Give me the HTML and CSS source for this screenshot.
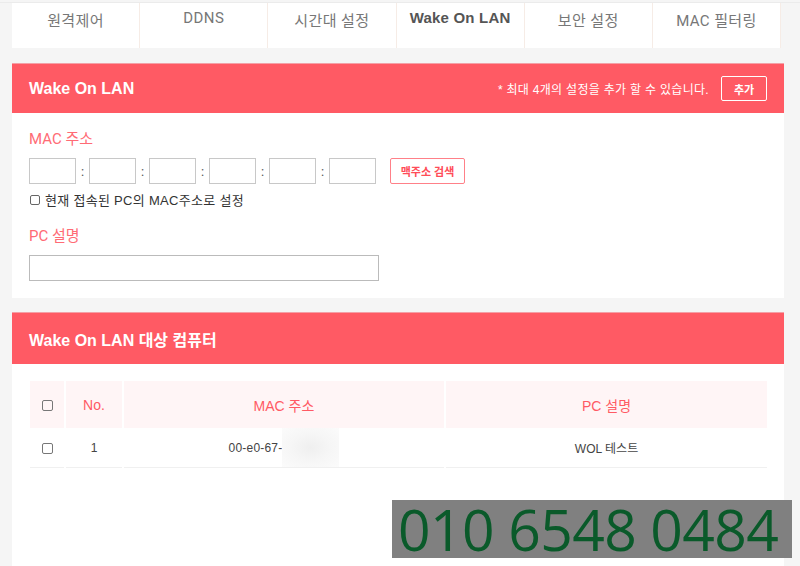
FILE: index.html
```html
<!DOCTYPE html>
<html lang="ko">
<head>
<meta charset="utf-8">
<link rel="stylesheet" href="styles.css">
</head>
<body>
<div class="page">
  <nav class="tabs">
    <div class="tab">원격제어</div>
    <div class="tab">DDNS</div>
    <div class="tab">시간대 설정</div>
    <div class="tab active">Wake On LAN</div>
    <div class="tab">보안 설정</div>
    <div class="tab">MAC 필터링</div>
  </nav>

  <section class="panel">
    <header class="panel-head">
      <h2>Wake On LAN</h2>
      <div class="head-right">
        <span class="note">* 최대 4개의 설정을 추가 할 수 있습니다.</span>
        <button class="btn-add">추가</button>
      </div>
    </header>
    <div class="form">
      <div class="label">MAC 주소</div>
      <div class="mac-row">
        <input class="mac" type="text"><span class="colon">:</span>
        <input class="mac" type="text"><span class="colon">:</span>
        <input class="mac" type="text"><span class="colon">:</span>
        <input class="mac" type="text"><span class="colon">:</span>
        <input class="mac" type="text"><span class="colon">:</span>
        <input class="mac" type="text">
        <button class="btn-search">맥주소 검색</button>
      </div>
      <label class="check-row"><span class="box"></span>현재 접속된 PC의 MAC주소로 설정</label>
      <div class="label label2">PC 설명</div>
      <input class="desc" type="text">
    </div>
  </section>

  <section class="panel panel2">
    <header class="panel-head">
      <h2>Wake On LAN 대상 컴퓨터</h2>
    </header>
    <div class="table-wrap">
      <table class="list">
        <thead>
          <tr>
            <th class="c-chk"><span class="cb"></span></th>
            <th class="c-no">No.</th>
            <th class="c-mac">MAC 주소</th>
            <th class="c-pc">PC 설명</th>
          </tr>
        </thead>
        <tbody>
          <tr>
            <td class="c-chk"><span class="cb"></span></td>
            <td class="c-no">1</td>
            <td class="c-mac"><span class="mac-txt">00-e0-67-</span><span class="blur"></span></td>
            <td class="c-pc">WOL 테스트</td>
          </tr>
        </tbody>
      </table>
    </div>
  </section>

  <div class="phone"><span class="phone-txt">010 6548 0484</span></div>
</div>
</body>
</html>
```

FILE: styles.css
```css
* { box-sizing: border-box; }
html, body { margin: 0; padding: 0; }
body {
  background: #f5f5f5;
  font-family: Roboto, "Noto Sans CJK KR", sans-serif;
  width: 800px;
  height: 566px;
  overflow: hidden;
}
.page {
  position: relative;
  padding: 3px 16px 0 12px;
  height: 566px;
  overflow: hidden;
}
.page::before {
  content: "";
  position: absolute;
  left: 0; right: 0; top: 2px;
  height: 1px;
  background: #ebebeb;
}
.tabs {
  display: flex;
  width: 769px;
  height: 45px;
  background: #fff;
}
.tab {
  flex: 1;
  text-align: center;
  padding-top: 6px;
  font-size: 15px;
  color: #777;
  border-right: 1px solid #f6ece6;
  letter-spacing: 0.4px;
}
.tab.active { color: #555; font-weight: bold; font-family: "Liberation Sans", "Noto Sans CJK KR", sans-serif; letter-spacing: 0.2px; }

.panel {
  margin-top: 15px;
  width: 772px;
  background: #fff;
  padding-bottom: 17px;
}
.panel-head {
  height: 50px;
  background: #ff5a64;
  display: flex;
  align-items: center;
  justify-content: space-between;
  padding: 0 17px;
  border-top: 1px solid #f4a0a6;
}
.panel-head h2 {
  margin: 0;
  color: #fff;
  font-size: 16px;
  font-weight: bold;
  font-family: "Liberation Sans", "Noto Sans CJK KR", sans-serif;
}
.head-right { display: flex; align-items: center; }
.note {
  color: #fff;
  font-size: 12px;
  letter-spacing: 0.3px;
  margin-right: 12px;
  font-family: "Liberation Sans", "Noto Sans CJK KR", sans-serif;
}
.btn-add {
  width: 46px;
  height: 25px;
  border: 1px solid #fff;
  border-radius: 2px;
  background: transparent;
  color: #fff;
  font-size: 11px;
  font-weight: bold;
  font-family: "Noto Sans CJK KR", sans-serif;
  padding: 0;
}
.form { padding: 16px 17px 0 17px; }
.label {
  color: #ff6b75;
  font-size: 15px;
  line-height: 20px;
}
.mac-row {
  display: flex;
  align-items: center;
  margin-top: 9px;
}
.mac {
  width: 47px;
  height: 26px;
  border: 1px solid #c8c8c8;
  border-radius: 0;
  margin: 0;
  padding: 0;
}
.colon {
  width: 13px;
  text-align: center;
  font-size: 13px;
  color: #555;
}
.btn-search {
  margin-left: 14px;
  width: 75px;
  height: 26px;
  border: 1px solid #ff8088;
  border-radius: 2px;
  background: #fff;
  color: #ff4d58;
  font-size: 11px;
  font-weight: bold;
  font-family: "Noto Sans CJK KR", sans-serif;
  padding: 0;
}
.check-row {
  display: flex;
  align-items: center;
  margin-top: 6px;
  font-size: 13px;
  letter-spacing: 0.3px;
  color: #333;
  font-family: "Liberation Sans", "Noto Sans CJK KR", sans-serif;
}
.box {
  width: 10px;
  height: 10px;
  border: 1px solid #666;
  border-radius: 2px;
  margin: 0 5px 0 1px;
}
.label2 { margin-top: 17px; }
.desc {
  display: block;
  margin-top: 9px;
  width: 350px;
  height: 26px;
  border: 1px solid #bbb;
  padding: 0;
}

.panel2 {
  margin-top: 14px;
  height: 254px;
  padding-bottom: 0;
}
.panel2 .panel-head { height: 52px; }
.table-wrap { padding: 17px 0 0 18px; }
.list {
  width: 741px;
  table-layout: fixed;
  border-collapse: separate;
  border-spacing: 2px 0;
  margin-left: -2px;
}
.list th {
  height: 47px;
  background: #fff5f6;
  color: #ff5a64;
  font-weight: normal;
  font-size: 14px;
  font-family: "Liberation Sans", "Noto Sans CJK KR", sans-serif;
}
.list td {
  height: 40px;
  padding: 0;
  text-align: center;
  font-size: 12px;
  color: #444;
  font-family: "Liberation Sans", "Noto Sans CJK KR", sans-serif;
  border-bottom: 1px solid #f0f0f0;
}
.c-chk { width: 34px; text-align: center; }
.c-no { width: 56px; }
.c-mac { width: 320px; }
.c-pc { width: 321px; }
.cb {
  display: inline-block;
  width: 11px;
  height: 11px;
  border: 1px solid #777;
  border-radius: 2px;
  vertical-align: middle;
}
.mac-txt { vertical-align: middle; letter-spacing: 0.2px; }
.blur {
  display: inline-block;
  width: 57px;
  height: 39px;
  vertical-align: middle;
  background: radial-gradient(ellipse at center, #efefef 0%, #f6f6f6 50%, #fbfbfb 100%);
}

.phone {
  position: absolute;
  left: 392px;
  top: 500px;
  width: 400px;
  height: 58px;
  background: #808080;
  display: flex;
  align-items: center;
  padding-left: 6px;
}
.phone-txt {
  color: #0a5a2a;
  font-family: "Open Sans", sans-serif;
  font-size: 57px;
  line-height: 1;
  letter-spacing: -0.6px;
  white-space: nowrap;
}
```
